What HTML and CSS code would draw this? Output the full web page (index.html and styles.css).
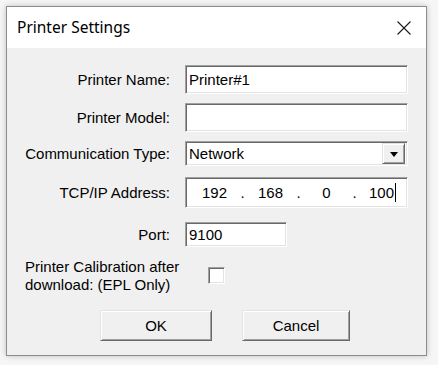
FILE: index.html
```html
<!DOCTYPE html>
<html>
<head>
<meta charset="utf-8">
<link rel="stylesheet" href="styles.css">
</head>
<body>
<div class="window">
  <div class="titlebar">
    <span class="title">Printer Settings</span>
    <span class="close">
      <svg width="14" height="14" viewBox="0 0 14 14"><path d="M0.5 0.5 L13.5 13.5 M13.5 0.5 L0.5 13.5" stroke="#1a1a1a" stroke-width="1.1" fill="none"/></svg>
    </span>
  </div>
  <div class="content">
    <div class="row r-name">
      <div class="lbl">Printer Name:</div>
      <div class="field wide h29">Printer#1</div>
    </div>
    <div class="row r-model">
      <div class="lbl">Printer Model:</div>
      <div class="field wide h29"></div>
    </div>
    <div class="row r-comm">
      <div class="lbl">Communication Type:</div>
      <div class="field wide h25 combo">
        <span class="combo-text">Network</span>
        <span class="drop"><span class="tri"></span></span>
      </div>
    </div>
    <div class="row r-ip">
      <div class="lbl">TCP/IP Address:</div>
      <div class="field wide h31 ip">
        <span class="seg">192</span><span class="dot">.</span>
        <span class="seg">168</span><span class="dot">.</span>
        <span class="seg">0</span><span class="dot">.</span>
        <span class="seg">100<span class="caret"></span></span>
      </div>
    </div>
    <div class="row r-port">
      <div class="lbl">Port:</div>
      <div class="field port h25">9100</div>
    </div>
    <div class="row r-cal">
      <div class="cal-lbl">Printer Calibration after<br>download: (EPL Only)</div>
      <div class="check"></div>
    </div>
    <div class="buttons">
      <button class="btn ok">OK</button>
      <button class="btn cancel">Cancel</button>
    </div>
  </div>
</div>
</body>
</html>
```

FILE: styles.css
```css
html, body {
  margin: 0;
  padding: 0;
}
body {
  background: #f6f6f6;
  width: 438px;
  height: 365px;
  overflow: hidden;
  font-family: "Liberation Sans", Arial, sans-serif;
  font-size: 15px;
  color: #000;
}
.window {
  margin: 6px 0 0 6px;
  width: 419px;
  height: 348px;
  border: 1px solid #8c8c8c;
  box-shadow: 0 0 6px rgba(0, 0, 0, 0.22);
  display: flex;
  flex-direction: column;
  background: #f0f0f0;
}
.titlebar {
  height: 41px;
  background: #fff;
  display: flex;
  align-items: center;
  padding-left: 10px;
  padding-right: 15px;
}
.title {
  font-family: "Noto Sans", "Open Sans", sans-serif;
  font-size: 15.5px;
  color: #000;
  flex: 1;
  margin-top: -1px;
}
.close {
  width: 14px;
  height: 14px;
  display: flex;
}
.content {
  flex: 1;
  background: #f0f0f0;
  padding-top: 17px;
  display: flex;
  flex-direction: column;
}
.row {
  display: flex;
  align-items: center;
}
.r-model, .r-comm { margin-top: 9px; }
.r-ip { margin-top: 11px; }
.r-port { margin-top: 14px; }
.r-cal { margin-top: 11px; }
.lbl {
  width: 163px;
  text-align: right;
  margin-right: 15px;
  white-space: nowrap;
}
.field {
  box-sizing: border-box;
  background: #fff;
  border: 1px solid;
  border-color: #a0a0a0 #fff #fff #a0a0a0;
  box-shadow: inset 1px 1px 0 #696969, inset -1px -1px 0 #e3e3e3;
  padding: 0 4px 0 3px;
  display: flex;
  align-items: center;
  white-space: nowrap;
}
.wide { width: 223px; }
.port { width: 102px; }
.h29 { height: 29px; }
.h25 { height: 25px; }
.h31 { height: 31px; }
.combo {
  padding: 2px 2px 2px 3px;
}
.combo-text {
  flex: 1;
}
.drop {
  box-sizing: border-box;
  width: 23px;
  height: 21px;
  background: #f0f0f0;
  border: 1px solid;
  border-color: #e3e3e3 #696969 #696969 #e3e3e3;
  box-shadow: inset 1px 1px 0 #fff, inset -1px -1px 0 #a0a0a0;
  display: flex;
  align-items: center;
  justify-content: center;
}
.tri {
  width: 0;
  height: 0;
  border-left: 4px solid transparent;
  border-right: 4px solid transparent;
  border-top: 5px solid #000;
  margin-top: 1px;
}
.ip {
  padding: 0 0 0 5px;
}
.seg {
  width: 47px;
  text-align: center;
  display: inline-flex;
  justify-content: center;
  align-items: center;
}
.dot {
  width: 9px;
  text-align: center;
}
.caret {
  display: inline-block;
  width: 1px;
  height: 19px;
  background: #000;
  margin-left: 1px;
}
.cal-lbl {
  width: 160px;
  padding-left: 18px;
  margin-right: 23px;
  line-height: 17.5px;
  white-space: nowrap;
}
.check {
  box-sizing: border-box;
  width: 17px;
  height: 17px;
  background: #fff;
  border: 1px solid;
  border-color: #a0a0a0 #fff #fff #a0a0a0;
  box-shadow: inset 1px 1px 0 #696969, inset -1px -1px 0 #e3e3e3;
}
.buttons {
  margin-top: 17px;
  display: flex;
  padding-left: 93px;
  gap: 30px;
}
.btn {
  box-sizing: border-box;
  height: 31px;
  font-family: "Liberation Sans", Arial, sans-serif;
  font-size: 15px;
  color: #000;
  background: #f0f0f0;
  border: 1px solid;
  border-color: #e3e3e3 #696969 #696969 #e3e3e3;
  box-shadow: inset 1px 1px 0 #fff, inset -1px -1px 0 #a0a0a0;
  padding: 0;
}
.ok { width: 112px; }
.cancel { width: 108px; }
```
